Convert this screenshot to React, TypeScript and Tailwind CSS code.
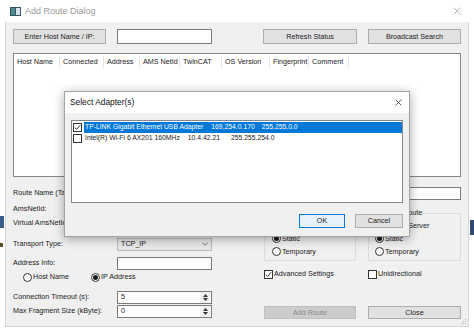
import React from "react";

function Radio({ on }: { on?: boolean }) {
  return (
    <span className="w-[9px] h-[9px] rounded-full border border-[#333] bg-white flex items-center justify-center shrink-0">
      {on && <span className="w-[5px] h-[5px] rounded-full bg-[#1a1a1a]" />}
    </span>
  );
}

function Check({ on }: { on?: boolean }) {
  return (
    <span className="w-[9px] h-[9px] border border-[#333] bg-white flex items-center justify-center shrink-0">
      {on && (
        <svg width="7" height="7" viewBox="0 0 7 7">
          <path d="M0.8 3.6 L2.7 5.4 L6.2 1.2" fill="none" stroke="#1a1a1a" strokeWidth="0.9" />
        </svg>
      )}
    </span>
  );
}

function Field({ children }: { children?: React.ReactNode }) {
  return (
    <div className="w-[95px] h-[13px] bg-white border border-[#7a7a7a] flex items-center px-[3px]">{children}</div>
  );
}

function Spin({ value }: { value: string }) {
  return (
    <div className="w-[95px] h-[13px] bg-white border border-[#7a7a7a] flex items-center pl-[3px]">
      <span>{value}</span>
      <div className="ml-auto mr-[1px] w-[10px] h-[11px] flex flex-col items-center justify-center gap-[1px] bg-[#f0f0f0]">
        <svg width="5" height="3" viewBox="0 0 5 3">
          <path d="M0 3 L2.5 0 L5 3 Z" fill="#333" />
        </svg>
        <svg width="5" height="3" viewBox="0 0 5 3">
          <path d="M0 0 L2.5 3 L5 0 Z" fill="#333" />
        </svg>
      </div>
    </div>
  );
}

const headers = [
  { label: "Host Name", w: "w-[46px]" },
  { label: "Connected", w: "w-[44px]" },
  { label: "Address", w: "w-[36px]" },
  { label: "AMS NetId", w: "w-[40px]" },
  { label: "TwinCAT", w: "w-[42px]" },
  { label: "OS Version", w: "w-[48px]" },
  { label: "Fingerprint", w: "w-[39px]" },
  { label: "Comment", w: "w-[40px]" },
];

export default function App() {
  return (
    <div className="relative w-[474px] h-[332px] overflow-hidden bg-white text-[7.2px] text-[#1a1a1a] font-['Liberation_Sans',Arial,sans-serif] leading-none">
      {/* desktop bits behind the window */}
      <span className="absolute left-0 top-[216px] w-[4px] h-[12px] bg-[#3a5d8c]" />
      <span className="absolute left-0 top-[243px] w-[3px] h-[4px] bg-[#5a4a2a]" />
      <span className="absolute right-0 top-[220px] w-[4px] h-[15px] bg-[#2f4b74]" />

      {/* Title bar */}
      <div className="h-[22px] flex items-center pl-[10px] pr-[13px]">
        <svg width="11" height="9" viewBox="0 0 11 9">
          <rect x="0" y="0" width="11" height="9" fill="#2f5763" />
          <rect x="1" y="1" width="4" height="7" fill="#4f8c8f" />
          <rect x="6" y="1" width="4" height="7" fill="#d7e3e6" />
        </svg>
        <span className="ml-[4px] text-[9px] text-[#9a9a9a]">Add Route Dialog</span>
        <svg className="ml-auto" width="8" height="8" viewBox="0 0 8 8">
          <path d="M0.5 0.5 L7.5 7.5 M7.5 0.5 L0.5 7.5" stroke="#a8a8a8" strokeWidth="0.8" />
        </svg>
      </div>

      {/* Window body */}
      <div className="mx-[5px] h-[305px] bg-[#f0f0f0] border-x border-b border-[#d6d6d6] px-[7px] pt-[7px] relative">
        <div className="flex h-[15px]">
          <div className="w-[93px] bg-[#e1e1e1] border border-[#adadad] flex items-center justify-center">Enter Host Name / IP:</div>
          <div className="ml-[11px] w-[95px] bg-white border border-[#7a7a7a]" />
          <div className="ml-auto w-[94px] bg-[#e1e1e1] border border-[#adadad] flex items-center justify-center">Refresh Status</div>
          <div className="ml-[11px] w-[93px] bg-[#e1e1e1] border border-[#adadad] flex items-center justify-center">Broadcast Search</div>
        </div>

        <div className="mt-[9px] h-[124px] bg-white border border-[#828790]">
          <div className="flex h-[15px] items-center">
            {headers.map((h) => (
              <div key={h.label} className={`${h.w} h-[12px] pl-[3px] border-r border-[#e5e5e5] flex items-center whitespace-nowrap`}>
                {h.label}
              </div>
            ))}
          </div>
        </div>

        {/* Lower form */}
        <div className="mt-[9px] flex">
          <div className="w-[199px] flex flex-col">
            <div className="h-[14px] flex items-center">
              <span className="w-[104px]">Route Name (Target):</span>
              <Field />
            </div>
            <div className="mt-[2px] h-[14px] flex items-center">
              <span className="w-[104px]">AmsNetId:</span>
              <Field />
            </div>
            <div className="h-[14px] flex items-center">
              <span className="w-[104px]">Virtual AmsNetId:</span>
              <Field />
            </div>
            <div className="mt-[7px] h-[14px] flex items-center">
              <span className="w-[104px]">Transport Type:</span>
              <div className="w-[95px] h-[13px] bg-[#e8e8e8] border border-[#b9b9b9] flex items-center px-[3px]">
                <span>TCP_IP</span>
                <svg className="ml-auto" width="6" height="4" viewBox="0 0 6 4">
                  <path d="M0.5 0.8 L3 3.2 L5.5 0.8" fill="none" stroke="#555" strokeWidth="0.8" />
                </svg>
              </div>
            </div>
            <div className="mt-[5px] h-[14px] flex items-center">
              <span className="w-[104px]">Address Info:</span>
              <Field />
            </div>
            <div className="h-[14px] flex items-center pl-[10px]">
              <Radio />
              <span className="ml-[1px]">Host Name</span>
              <span className="ml-[22px]">
                <Radio on />
              </span>
              <span className="ml-[1px]">IP Address</span>
            </div>
            <div className="mt-[6px] h-[14px] flex items-center">
              <span className="w-[104px]">Connection Timeout (s):</span>
              <Spin value="5" />
            </div>
            <div className="h-[14px] flex items-center">
              <span className="w-[104px]">Max Fragment Size (kByte):</span>
              <Spin value="0" />
            </div>
          </div>

          <div className="ml-auto w-[197px] flex flex-col">
            <div className="h-[14px] flex items-center">
              <span>Route Name (Remote):</span>
              <div className="ml-auto w-[93px] h-[13px] bg-white border border-[#7a7a7a]" />
            </div>
            <div className="mt-[13px] flex">
              <div className="relative w-[92px] h-[48px] border border-[#dcdcdc] pl-[7px] pt-[5px]">
                <span className="absolute left-[6px] -top-[5px] px-[1px] bg-[#f0f0f0]">Target Route</span>
                <div className="h-[13px] flex items-center gap-[1px]"><Radio /><span>Project</span></div>
                <div className="h-[13px] flex items-center gap-[1px]"><Radio on /><span>Static</span></div>
                <div className="h-[13px] flex items-center gap-[1px]"><Radio /><span>Temporary</span></div>
              </div>
              <div className="relative ml-auto w-[93px] h-[48px] border border-[#dcdcdc] pl-[6px] pt-[5px]">
                <span className="absolute left-[6px] -top-[5px] px-[1px] bg-[#f0f0f0]">Remote Route</span>
                <div className="h-[13px] flex items-center gap-[1px]"><Radio /><span>None / Server</span></div>
                <div className="h-[13px] flex items-center gap-[1px]"><Radio on /><span>Static</span></div>
                <div className="h-[13px] flex items-center gap-[1px]"><Radio /><span>Temporary</span></div>
              </div>
            </div>
            <div className="mt-[7px] h-[12px] grid grid-cols-[104px_1fr] items-center">
              <div className="flex items-center gap-[1px]"><Check on /><span>Advanced Settings</span></div>
              <div className="flex items-center gap-[1px]"><Check /><span>Unidirectional</span></div>
            </div>
            <div className="mt-[26px] h-[13px] flex">
              <div className="w-[92px] bg-[#cccccc] border border-[#bfbfbf] text-[#8a8a8a] flex items-center justify-center">Add Route</div>
              <div className="ml-auto w-[93px] bg-[#e1e1e1] border border-[#adadad] flex items-center justify-center">Close</div>
            </div>
          </div>
        </div>

        {/* resize grip */}
        <svg className="absolute right-[1px] bottom-[1px]" width="6" height="6" viewBox="0 0 6 6">
          <rect x="4" y="0" width="1" height="1" fill="#b0b0b0" />
          <rect x="2" y="2" width="1" height="1" fill="#b0b0b0" />
          <rect x="4" y="2" width="1" height="1" fill="#b0b0b0" />
          <rect x="0" y="4" width="1" height="1" fill="#b0b0b0" />
          <rect x="2" y="4" width="1" height="1" fill="#b0b0b0" />
          <rect x="4" y="4" width="1" height="1" fill="#b0b0b0" />
        </svg>
      </div>

      {/* Select Adapter(s) dialog */}
      <div className="absolute left-[64px] top-[91px] w-[346px] h-[146px] bg-[#f0f0f0] border border-[#a3a3a3] shadow-[0_2px_10px_rgba(0,0,0,0.35)] flex flex-col">
        <div className="h-[21px] bg-white flex items-center pl-[5px] pr-[7px]">
          <span className="text-[8.4px] text-[#111]">Select Adapter(s)</span>
          <svg className="ml-auto" width="7" height="7" viewBox="0 0 7 7">
            <path d="M0.5 0.5 L6.5 6.5 M6.5 0.5 L0.5 6.5" stroke="#333" strokeWidth="0.8" />
          </svg>
        </div>
        <div className="px-[6px] pt-[7px]">
          <div className="h-[83px] bg-white border border-[#828790] pt-[1px] text-[6.8px]">
            <div className="h-[11px] flex items-center pl-[1px]">
              <Check on />
              <div className="ml-[2px] flex-1 h-[11px] bg-[#0078d7] text-white flex items-center pl-[1px] whitespace-nowrap">
                <span>TP-LINK Gigabit Ethernet USB Adapter</span>
                <span className="ml-[8px]">169.254.0.170</span>
                <span className="ml-[7px]">255.255.0.0</span>
              </div>
            </div>
            <div className="h-[11px] flex items-center pl-[1px]">
              <Check />
              <div className="ml-[2px] flex-1 flex items-center pl-[1px] whitespace-nowrap">
                <span>Intel(R) Wi-Fi 6 AX201 160MHz</span>
                <span className="ml-[8px]">10.4.42.21</span>
                <span className="ml-[11px]">255.255.254.0</span>
              </div>
            </div>
          </div>
          <div className="mt-[11px] flex justify-end gap-[10px]">
            <div className="w-[46px] h-[14px] bg-[#e5f1fb] border border-[#0078d7] flex items-center justify-center">OK</div>
            <div className="w-[48px] h-[14px] bg-[#e1e1e1] border border-[#adadad] flex items-center justify-center">Cancel</div>
          </div>
        </div>
      </div>
    </div>
  );
}
